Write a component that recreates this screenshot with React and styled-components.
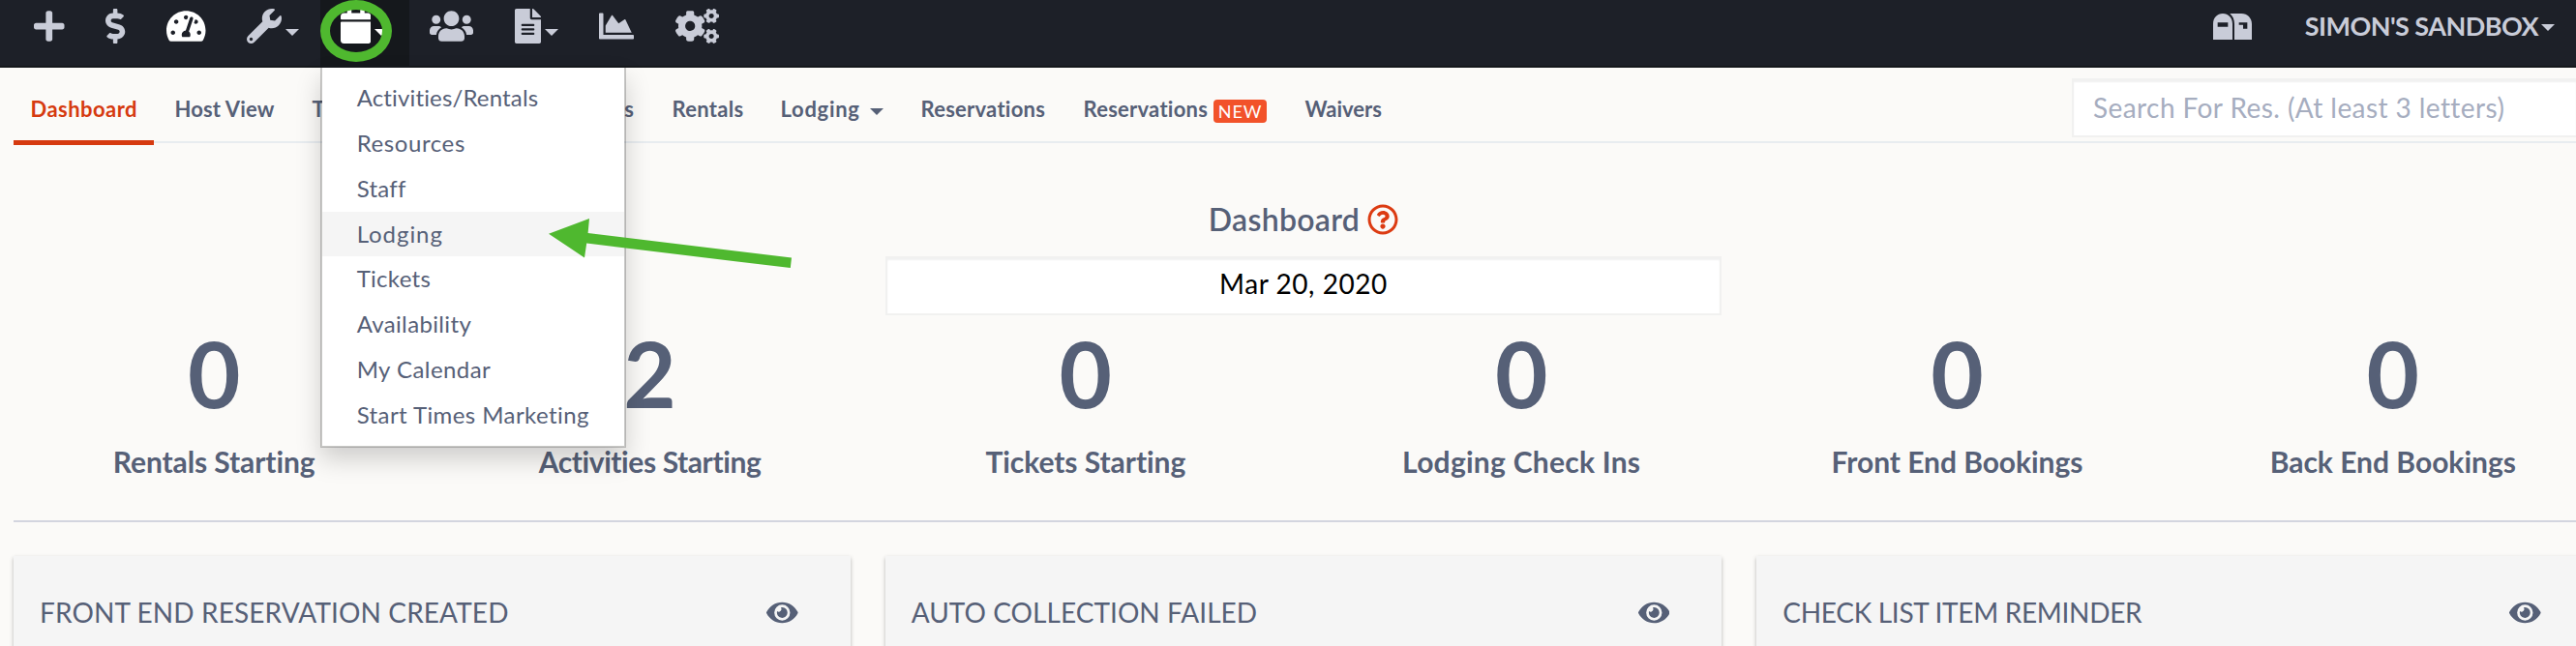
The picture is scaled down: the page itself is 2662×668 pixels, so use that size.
import React from "react";
import styled, { createGlobalStyle, css } from "styled-components";
import {
    FaPlus,
    FaDollarSign,
    FaTachometerAlt,
    FaWrench,
    FaCalendar,
    FaUsers,
    FaFileAlt,
    FaChartArea,
    FaCogs,
    FaRegQuestionCircle,
    FaEye,
} from "react-icons/fa";

const GlobalStyle = createGlobalStyle`
  * {
    box-sizing: border-box;
  }
  body {
    margin: 0;
    background: #fbfaf8;
    color: #566077;
    font-family: Lato, "Open Sans", sans-serif;
  }
`;

const Page = styled.div`
  height: 668px;
  overflow: hidden;
`;

const NavBar = styled.nav`
  display: flex;
  height: 70px;
  padding-left: 14px;
  padding-right: 22px;
  background: #1d2028;
  border-bottom: 2px solid #15181c;
`;

const NavItem = styled.div`
  position: relative;
  display: flex;
  flex: none;
  align-items: center;
  height: 68px;
  padding: 0 21.3px 14px;
  color: #c9ccd8;
  svg.icon {
    flex: none;
    height: 36px;
    width: ${(p) => p.$iconWidth}px;
  }
  ${(p) =>
      p.$current &&
      css`
        color: #fff;
      `}
  ${(p) =>
      p.$open &&
      css`
        height: 70px;
        padding-bottom: 16px;
        color: #fff;
        background: #15181c;
      `}
`;

const Caret = styled.span`
  width: 0;
  height: 0;
  flex: none;
  border-left: 7px solid transparent;
  border-right: 7px solid transparent;
  border-top: 7px solid currentColor;
  margin-left: ${(p) => p.$gap}px;
  margin-top: ${(p) => p.$drop}px;
`;

const Ring = styled.span`
  position: absolute;
  z-index: 3;
  left: 0;
  top: 0;
  width: 74px;
  height: 64px;
  border: 10px solid #4fb82f;
  border-radius: 50%;
`;

const NavRight = styled.div`
  display: flex;
  align-items: center;
  height: 54px;
  margin-left: auto;
  color: #c9ccd8;
`;

const MailboxIcon = styled.svg`
  width: 40px;
  height: 27px;
  margin-right: 55px;
`;

const Account = styled.span`
  font-size: 27px;
  font-weight: 700;
  line-height: 34px;
  letter-spacing: -0.55px;
`;

const Menu = styled.ul`
  position: absolute;
  z-index: 2;
  left: 0;
  top: 70px;
  width: 316px;
  margin: 0;
  padding: 8px 0;
  list-style: none;
  background: #fff;
  background-clip: padding-box;
  border: 2px solid rgba(0, 0, 0, 0.2);
  border-top: none;
  box-shadow: 0 12px 24px rgba(0, 0, 0, 0.175);
`;

const MenuItem = styled.li`
  position: relative;
  height: 46.86px;
  padding-left: 36px;
  line-height: 46px;
  font-size: 24px;
  letter-spacing: ${(p) => p.$track}px;
  white-space: nowrap;
  color: #566077;
  background: ${(p) => (p.$hover ? "#f5f5f5" : "transparent")};
`;

const Arrow = styled.svg`
  position: absolute;
  left: 234px;
  top: 7px;
  width: 251px;
  height: 52px;
  fill: #4fb82f;
`;

const TabBar = styled.div`
  display: flex;
  height: 78px;
  margin-left: 14px;
  border-bottom: 2px solid #e8ecf0;
`;

const Tab = styled.a`
  display: flex;
  flex: none;
  align-items: center;
  width: ${(p) => p.$width}px;
  height: 80px;
  margin-right: 4px;
  padding: 30px 0 19px 17.5px;
  border-bottom: 5px solid ${(p) => (p.$active ? "#d63a10" : "transparent")};
  color: ${(p) => (p.$active ? "#d63a10" : "#566077")};
  font-size: 22px;
  font-weight: 700;
  line-height: 26px;
  letter-spacing: ${(p) => p.$track}px;
  white-space: nowrap;
`;

const NewBadge = styled.span`
  width: 55px;
  height: 24px;
  margin: 4px 0 0 6px;
  border-radius: 4px;
  background: #f2522a;
  color: #fff;
  font-size: 18px;
  font-weight: 400;
  line-height: 24px;
  letter-spacing: 1px;
  text-align: center;
`;

const fieldStyles = css`
  height: 61px;
  border: 2px solid #f1f1f0;
  border-radius: 0;
  outline: none;
  background: #fff;
  box-shadow: inset 0 2px 2px rgba(0, 0, 0, 0.06);
  font-family: inherit;
  font-size: 28px;
`;

const SearchInput = styled.input`
  ${fieldStyles}
  width: 521px;
  margin: 11px 0 0 auto;
  padding: 0 0 2px 20px;
  border-right: none;
  letter-spacing: 0.42px;
  &::placeholder {
    color: #a6adbf;
    opacity: 1;
  }
`;

/* wider than the window, the last column runs past the right edge */
const Content = styled.main`
  display: flex;
  flex-direction: column;
  width: 2702px;
  margin-left: -4px;
  padding-top: 63px;
`;

const Title = styled.h1`
  display: flex;
  align-items: center;
  justify-content: center;
  height: 32px;
  margin: 0;
  font-size: 32px;
  font-weight: 600;
  line-height: 32px;
  letter-spacing: 0.3px;
  svg {
    margin-left: 8px;
    color: #dc3b12;
  }
`;

const DateInput = styled.input`
  ${fieldStyles}
  align-self: center;
  width: 864px;
  margin: 22px 0 0;
  padding: 0 0 5px;
  color: #000;
  letter-spacing: 0.55px;
  text-align: center;
`;

const Stats = styled.section`
  display: grid;
  grid-template-columns: repeat(6, 1fr);
  margin-top: 13px;
  text-align: center;
  font-weight: 700;
`;

const Count = styled.div`
  font-size: 94px;
  line-height: 94px;
`;

const StatLabel = styled.div`
  margin-top: 26px;
  font-size: 30px;
  line-height: 36px;
  letter-spacing: ${(p) => p.$track}px;
`;

const Divider = styled.hr`
  width: 2666px;
  margin: 43px 18px 0;
  border: none;
  border-top: 2px solid #d3d5df;
`;

const Cards = styled.section`
  display: grid;
  grid-template-columns: repeat(3, 1fr);
  gap: 36px;
  padding: 35px 18px 0;
`;

const Card = styled.article`
  height: 300px;
  background: #f5f5f5;
  box-shadow: 0 2px 4px rgba(0, 0, 0, 0.28);
`;

const CardHeader = styled.header`
  display: flex;
  align-items: center;
  justify-content: space-between;
  height: 116px;
  padding: 0 54px 0 27px;
  font-size: 28px;
  letter-spacing: ${(p) => p.$track}px;
  svg {
    height: 29px;
    width: 32.6px;
  }
`;

const navItems = [
    { name: "add", icon: FaPlus, width: 31.5 },
    { name: "payments", icon: FaDollarSign, width: 20.25 },
    { name: "dashboard", icon: FaTachometerAlt, width: 40.5, current: true },
    { name: "setup", icon: FaWrench, width: 36, caret: true },
    { name: "calendar", icon: FaCalendar, width: 31.5, caret: true, open: true },
    { name: "customers", icon: FaUsers, width: 45 },
    { name: "documents", icon: FaFileAlt, width: 27, caret: true },
    { name: "reports", icon: FaChartArea, width: 36 },
    { name: "settings", icon: FaCogs, width: 45 },
];

const menuItems = [
    { label: "Activities/Rentals", track: 0.15 },
    { label: "Resources", track: 0.6 },
    { label: "Staff", track: 0.3 },
    { label: "Lodging", track: 0.95, active: true },
    { label: "Tickets", track: 0.3 },
    { label: "Availability", track: 0.35 },
    { label: "My Calendar", track: 0.45 },
    { label: "Start Times Marketing", track: 0.42 },
];

const tabs = [
    { label: "Dashboard", width: 145, track: 0.45, active: true },
    { label: "Host View", width: 138, track: 0.15 },
    { label: "Tickets", width: 234, track: 0.3 },
    { label: "Activities", width: 130, track: 0.3 },
    { label: "Rentals", width: 108, track: 0.3 },
    { label: "Lodging", width: 141, track: 0.7, caret: true },
    { label: "Reservations", width: 164, track: 0.25 },
    { label: "Reservations", width: 225, track: 0.25, isNew: true },
    { label: "Waivers", width: 116, track: 0 },
];

const stats = [
    { count: 0, label: "Rentals Starting", track: -0.1 },
    { count: 2, label: "Activities Starting", track: -0.4 },
    { count: 0, label: "Tickets Starting", track: -0.05 },
    { count: 0, label: "Lodging Check Ins", track: 0.25 },
    { count: 0, label: "Front End Bookings", track: -0.05 },
    { count: 0, label: "Back End Bookings", track: 0 },
];

const cards = [
    { title: "FRONT END RESERVATION CREATED", track: 0.12 },
    { title: "AUTO COLLECTION FAILED", track: 0.05 },
    { title: "CHECK LIST ITEM REMINDER", track: -0.3 },
];

const CalendarMenu = () => (
    <Menu>
        {menuItems.map(({ label, track, active }) => (
            <MenuItem key={label} $track={track} $hover={active}>
                {label}
                {active && (
                    <Arrow viewBox="0 0 251 52">
                        <path d="M0 15.7 42 0 40.6 15 251 40.6 249.8 51 39.2 25.6 37 40.4z" />
                    </Arrow>
                )}
            </MenuItem>
        ))}
    </Menu>
);

const TopNav = () => (
    <NavBar>
        {navItems.map(({ name, icon: Icon, width, caret, open, current }) => (
            <NavItem key={name} $iconWidth={width} $open={open} $current={current}>
                <Icon className="icon" />
                {caret && <Caret $gap={4} $drop={13} />}
                {open && <Ring />}
                {open && <CalendarMenu />}
            </NavItem>
        ))}
        <NavRight>
            <MailboxIcon viewBox="0 0 120 81" fill="currentColor">
                <path
                    fillRule="evenodd"
                    d="M0 81V32C0 13 13 0 30 0s30 13 30 32v49zM14 28v13h32V28z"
                />
                <path
                    fillRule="evenodd"
                    d="M52 0h36c18 0 32 14 32 32v49H66V32C66 18 61 8 52 0zM80 28v7h13v12h13V28z"
                />
            </MailboxIcon>
            <Account>SIMON'S SANDBOX</Account>
            <Caret $gap={3} $drop={3} />
        </NavRight>
    </NavBar>
);

const App = () => {
    return (
        <Page>
            <GlobalStyle />
            <TopNav />
            <TabBar>
                {tabs.map((tab, i) => (
                    <Tab key={i} $width={tab.width} $track={tab.track} $active={tab.active}>
                        {tab.label}
                        {tab.caret && <Caret $gap={10} $drop={5} />}
                        {tab.isNew && <NewBadge>NEW</NewBadge>}
                    </Tab>
                ))}
                <SearchInput type="text" placeholder="Search For Res. (At least 3 letters)" />
            </TabBar>
            <Content>
                <Title>
                    Dashboard
                    <FaRegQuestionCircle />
                </Title>
                <DateInput type="text" defaultValue="Mar 20, 2020" />
                <Stats>
                    {stats.map(({ count, label, track }) => (
                        <div key={label}>
                            <Count>{count}</Count>
                            <StatLabel $track={track}>{label}</StatLabel>
                        </div>
                    ))}
                </Stats>
                <Divider />
                <Cards>
                    {cards.map(({ title, track }) => (
                        <Card key={title}>
                            <CardHeader $track={track}>
                                {title}
                                <FaEye />
                            </CardHeader>
                        </Card>
                    ))}
                </Cards>
            </Content>
        </Page>
    );
};

export default App;
